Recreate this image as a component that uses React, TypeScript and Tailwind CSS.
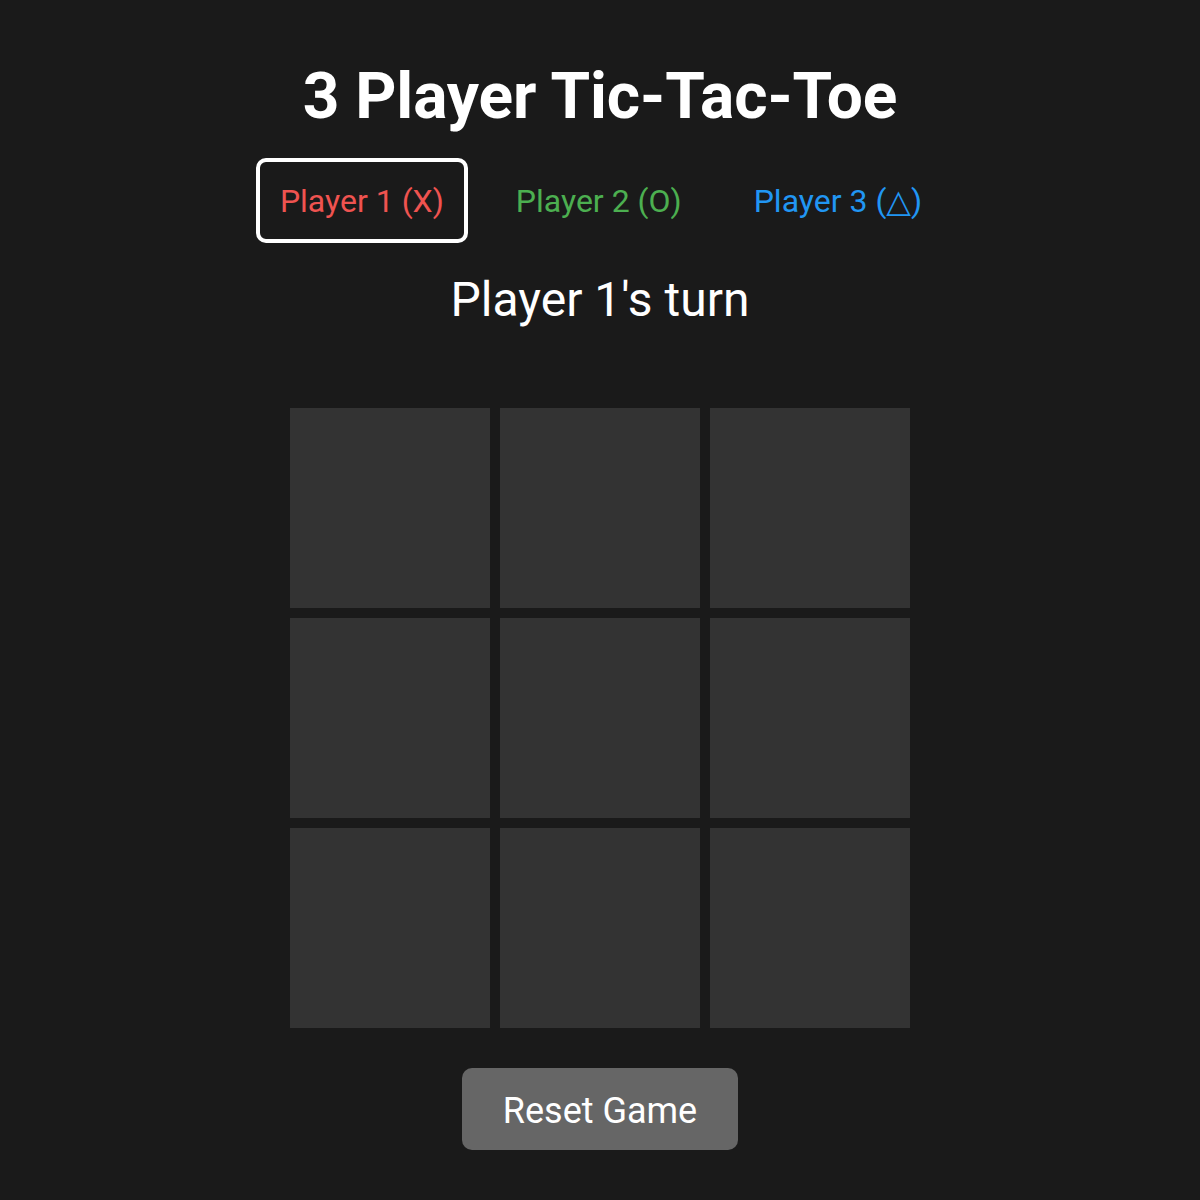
import React from "react";

const players = [
  { label: "Player 1 (X)", color: "text-[#ef5350]", active: true },
  { label: "Player 2 (O)", color: "text-[#4caf50]", active: false },
  { label: "Player 3 (\u25B3)", color: "text-[#2196f3]", active: false },
];

export default function App() {
  return (
    <div
      className="min-h-[1200px] w-full bg-[#1a1a1a] flex flex-col items-center pt-[59px]"
      style={{ fontFamily: 'Roboto, "DejaVu Sans", sans-serif' }}
    >
      <h1 className="text-[64px] font-bold leading-[75px] tracking-[-0.1px] text-white">3 Player Tic-Tac-Toe</h1>
      <div className="mt-[24px] flex gap-[24px] pl-[2px]">
        {players.map((p) => (
          <div
            key={p.label}
            className={`rounded-[10px] border-4 px-[20px] pt-[20px] pb-[19px] text-[32px] leading-[38px] ${p.color} ${
              p.active ? "border-white" : "border-transparent"
            }`}
          >
            {p.label}
          </div>
        ))}
      </div>
      <div className="mt-[29px] text-[48px] leading-[56px] text-white">Player 1's turn</div>
      <div className="mt-[80px] grid grid-cols-[repeat(3,200px)] gap-[10px]">
        {Array.from({ length: 9 }).map((_, i) => (
          <div key={i} className="h-[200px] w-[200px] bg-[#333333]" />
        ))}
      </div>
      <button className="mt-[40px] rounded-[10px] bg-[#666666] px-[41px] pt-[22px] pb-[18px] text-[36px] leading-[42px] text-white">
        Reset Game
      </button>
    </div>
  );
}
